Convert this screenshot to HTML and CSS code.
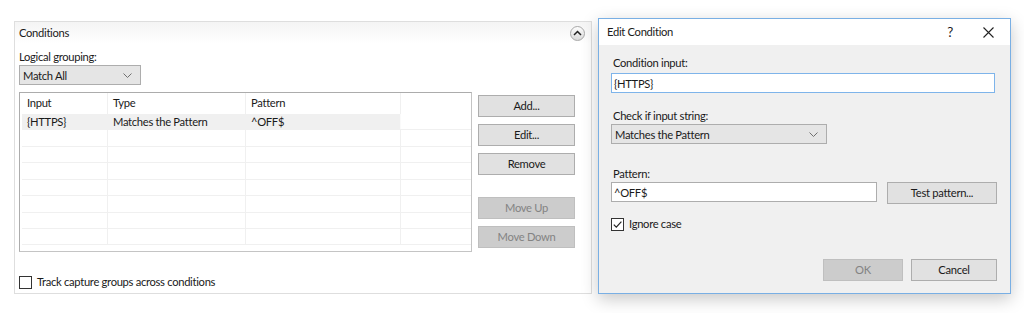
FILE: index.html
```html
<!DOCTYPE html>
<html>
<head>
<meta charset="utf-8">
<link rel="stylesheet" href="styles.css">
</head>
<body>
<div class="page">
  <section class="panel">
    <div class="panel-head">
      <span class="panel-title">Conditions</span>
      <span class="collapse"><svg width="9" height="6" viewBox="0 0 9 6"><path d="M1 5 L4.5 1.5 L8 5" fill="none" stroke="#222" stroke-width="1.5"/></svg></span>
    </div>
    <div class="panel-body">
      <div class="lbl">Logical grouping:</div>
      <div class="combo combo-group"><span>Match All</span><svg class="chev" width="9" height="5" viewBox="0 0 9 5"><path d="M0.5 0.5 L4.5 4.5 L8.5 0.5" fill="none" stroke="#707070" stroke-width="1"/></svg></div>
      <div class="grid-row">
        <div class="table">
          <div class="tr th"><div class="c c1">Input</div><div class="c c2">Type</div><div class="c c3">Pattern</div><div class="c c4"></div></div>
          <div class="tr sel"><div class="c c1">{HTTPS}</div><div class="c c2">Matches the Pattern</div><div class="c c3">^OFF$</div><div class="c c4 nosel"></div></div>
          <div class="tr"><div class="c c1"></div><div class="c c2"></div><div class="c c3"></div><div class="c c4"></div></div>
          <div class="tr"><div class="c c1"></div><div class="c c2"></div><div class="c c3"></div><div class="c c4"></div></div>
          <div class="tr"><div class="c c1"></div><div class="c c2"></div><div class="c c3"></div><div class="c c4"></div></div>
          <div class="tr"><div class="c c1"></div><div class="c c2"></div><div class="c c3"></div><div class="c c4"></div></div>
          <div class="tr"><div class="c c1"></div><div class="c c2"></div><div class="c c3"></div><div class="c c4"></div></div>
          <div class="tr"><div class="c c1"></div><div class="c c2"></div><div class="c c3"></div><div class="c c4"></div></div>
          <div class="tr"><div class="c c1"></div><div class="c c2"></div><div class="c c3"></div><div class="c c4"></div></div>
        </div>
        <div class="btns">
          <div class="btn">Add...</div>
          <div class="btn">Edit...</div>
          <div class="btn">Remove</div>
          <div class="btn disabled gap-big">Move Up</div>
          <div class="btn disabled">Move Down</div>
        </div>
      </div>
      <div class="chk chk-track"><span class="box"></span><span>Track capture groups across conditions</span></div>
    </div>
  </section>

  <section class="dialog">
    <div class="titlebar">
      <span class="dtitle">Edit Condition</span>
      <span class="help">?</span>
      <span class="close"><svg width="11" height="11" viewBox="0 0 11 11"><path d="M0.5 0.5 L10.5 10.5 M10.5 0.5 L0.5 10.5" stroke="#222" stroke-width="1.1" fill="none"/></svg></span>
    </div>
    <div class="dbody">
      <div class="dlbl">Condition input:</div>
      <div class="field field-input focus">{HTTPS}</div>
      <div class="dlbl l2">Check if input string:</div>
      <div class="combo combo-check"><span>Matches the Pattern</span><svg class="chev" width="9" height="5" viewBox="0 0 9 5"><path d="M0.5 0.5 L4.5 4.5 L8.5 0.5" fill="none" stroke="#707070" stroke-width="1"/></svg></div>
      <div class="dlbl l3">Pattern:</div>
      <div class="prow">
        <div class="field field-pattern">^OFF$</div>
        <div class="btn btn-test">Test pattern...</div>
      </div>
      <div class="chk chk-ignore"><span class="box checked"><svg width="11" height="11" viewBox="0 0 11 11"><path d="M1.8 5.6 L4.3 8.2 L9.4 2.6" fill="none" stroke="#222" stroke-width="1.2"/></svg></span><span>Ignore case</span></div>
      <div class="footer">
        <div class="btn disabled btn-ok">OK</div>
        <div class="btn btn-cancel">Cancel</div>
      </div>
    </div>
  </section>
</div>
</body>
</html>
```

FILE: styles.css
```css
* { box-sizing: border-box; }
html, body { margin: 0; padding: 0; background: #fff; }
body {
  font-family: "Lato", "Noto Sans", sans-serif;
  font-size: 11.2px;
  letter-spacing: -0.3px;
  color: #1a1a1a;
  width: 1024px;
  height: 313px;
  overflow: hidden;
}
.page {
  display: flex;
  align-items: flex-start;
  padding-left: 14px;
}

/* Left panel */
.panel {
  margin-top: 21px;
  width: 578px;
  height: 273px;
  border: 1px solid #dedede;
  background: #fff;
}
.panel-head {
  height: 22px;
  display: flex;
  align-items: center;
  justify-content: space-between;
  padding: 0 6px 0 4px;
  background: linear-gradient(#f4f4f4, #ffffff);
}
.panel-title { line-height: 16px; }
.collapse {
  width: 15px;
  height: 15px;
  border-radius: 50%;
  border: 1px solid #a8a8a8;
  background: linear-gradient(#fdfdfd, #d9d9d9);
  display: flex;
  align-items: center;
  justify-content: center;
}
.panel-body {
  padding: 5px 4px 0 4px;
}
.lbl { line-height: 16px; height: 16px; }
.combo {
  height: 20px;
  border: 1px solid #adadad;
  background: #e5e5e5;
  display: flex;
  align-items: center;
  justify-content: space-between;
  padding: 0 8px 0 3px;
}
.combo-group { width: 122px; }
.chev { display: block; }

.grid-row {
  display: flex;
  align-items: flex-start;
  margin-top: 7px;
}
.table {
  width: 453px;
  height: 160px;
  border: 1px solid #acacac;
  border-right-color: #c4c4c4;
  border-bottom-color: #c4c4c4;
  overflow: hidden;
  padding-left: 2px;
  background: #fff;
}
.tr {
  display: flex;
  height: 16.43px;
  border-bottom: 1px solid #f0f0f0;
}
.tr.th { height: 21px; border-bottom: none; }
.c {
  border-right: 1px solid #f0f0f0;
  padding-left: 5px;
  line-height: 16px;
  white-space: nowrap;
}
.th .c { line-height: 20px; }
.c1 { width: 86px; }
.c2 { width: 138px; }
.c3 { width: 155px; }
.c4 { flex: 1; border-right: none; }
.sel .c1, .sel .c2, .sel .c3 { background: #f0f0f0; }
.sel .c3 { border-right-color: #fafafa; }

.btns {
  margin-left: 6px;
  margin-top: 3px;
  display: flex;
  flex-direction: column;
  gap: 7px;
}
.btn {
  height: 22px;
  border: 1px solid #adadad;
  background: #e1e1e1;
  display: flex;
  align-items: center;
  justify-content: center;
  line-height: 16px;
}
.btns .btn { width: 97px; }
.btn.gap-big { margin-top: 15px; }
.btn.disabled {
  background: #cccccc;
  border-color: #bfbfbf;
  color: #838383;
}

.chk {
  display: flex;
  align-items: center;
  line-height: 16px;
}
.box {
  width: 13px;
  height: 13px;
  border: 1px solid #333;
  background: #fff;
  margin-right: 5px;
  display: flex;
  align-items: center;
  justify-content: center;
}
.chk-track { margin-top: 22px; }

/* Dialog */
.dialog {
  margin-left: 6px;
  margin-top: 18px;
  width: 413px;
  height: 276px;
  border: 1px solid #79afe4;
  background: #f0f0f0;
  box-shadow: 0 5px 16px rgba(0, 0, 0, 0.22);
  display: flex;
  flex-direction: column;
}
.titlebar {
  height: 26px;
  background: #fff;
  display: flex;
  align-items: center;
  padding-left: 8px;
}
.dtitle { flex: 1; line-height: 16px; }
.help { width: 12px; margin-right: 27px; text-align: center; font-size: 13.5px; }
.close { width: 11px; margin-right: 16px; display: flex; }
.dbody {
  flex: 1;
  padding: 10px 13px 12px 12px;
  display: flex;
  flex-direction: column;
}
.dlbl { line-height: 16px; height: 16px; padding-left: 2px; }
.field {
  height: 20px;
  border: 1px solid #adadad;
  background: #fff;
  padding-left: 2px;
  display: flex;
  align-items: center;
}
.field-input { width: 384px; margin-top: 2px; }
.field.focus { border-color: #7eb4ea; }
.l2 { margin-top: 15px; }
.combo-check { width: 216px; }
.l3 { margin-top: 22px; }
.prow { display: flex; align-items: flex-start; }
.field-pattern { width: 266px; }
.btn-test { width: 110px; margin-left: 10px; }
.chk-ignore { margin-top: 12px; }
.checked { border-color: #333; }
.footer {
  margin-top: auto;
  display: flex;
  justify-content: flex-end;
  gap: 8px;
  padding-right: 0;
}
.btn-ok { width: 80px; color: #a3a3a3; }
.btn-cancel { width: 86px; }
```
